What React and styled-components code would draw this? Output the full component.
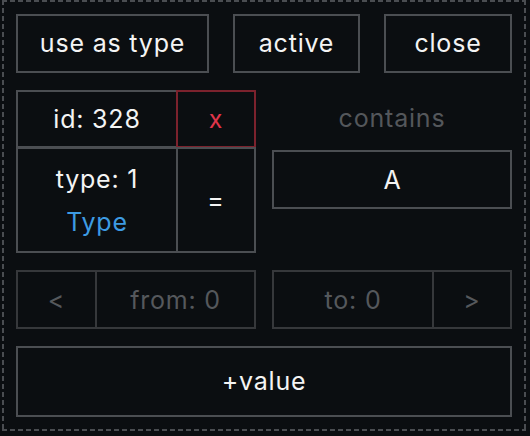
import React from 'react';
import styled, { createGlobalStyle } from 'styled-components';

const GlobalStyle = createGlobalStyle`
  html, body {
    margin: 0;
    padding: 0;
    background: #0b0e11;
  }
  body {
    font-family: Inter, "Noto Sans", sans-serif;
    color: #f2f2f2;
  }
`;

const dash = '#4a4d51';

const Frame = styled.div`
  margin: 0 4px 0 2px;
  padding: 14px;
  display: flex;
  flex-direction: column;
  gap: 17px;
  background:
    repeating-linear-gradient(90deg, ${dash} 0 5px, transparent 5px 8px) top left / 100% 2px no-repeat,
    repeating-linear-gradient(90deg, ${dash} 0 5px, transparent 5px 8px) bottom left / 100% 2px no-repeat,
    repeating-linear-gradient(180deg, ${dash} 0 5px, transparent 5px 8px) top left / 2px 100% no-repeat,
    repeating-linear-gradient(180deg, ${dash} 0 5px, transparent 5px 8px) top right / 2px 100% no-repeat;
`;

const Toolbar = styled.div`
  display: flex;
  gap: 24px;
`;

const Button = styled.button`
  box-sizing: border-box;
  width: ${(p) => p.$width || '100%'};
  flex-grow: ${(p) => (p.$grow ? 1 : 0)};
  flex-shrink: 0;
  height: ${(p) => p.$height || '59px'};
  background: transparent;
  border: 2px solid #4b4e52;
  color: #f4f4f4;
  font-family: inherit;
  font-size: 25px;
  letter-spacing: 0.8px;
  padding: 0 0 2px;
  display: flex;
  align-items: center;
  justify-content: center;
`;

const Columns = styled.div`
  display: grid;
  grid-template-columns: minmax(0, 1fr) minmax(0, 1fr);
  column-gap: 16px;
`;

const Table = styled.div`
  display: grid;
  grid-template-columns: 162px 78px;
  grid-template-rows: 58px 105px;
`;

const Cell = styled.div`
  box-sizing: border-box;
  border: 2px solid ${(p) => (p.$danger ? '#7c222d' : '#4b4e52')};
  color: ${(p) => (p.$danger ? '#e0354a' : '#f4f4f4')};
  font-size: 25px;
  letter-spacing: 0.8px;
  display: flex;
  flex-direction: column;
  align-items: center;
  justify-content: center;
  gap: 13px;
  margin-left: ${(p) => (p.$joinLeft ? '-2px' : '0')};
  margin-top: ${(p) => (p.$joinTop ? '-1px' : '0')};
`;

const Link = styled.span`
  color: #3d9be3;
`;

const Filter = styled.div`
  display: grid;
  grid-template-rows: 60px 59px;
`;

const Label = styled.div`
  color: #54575b;
  font-size: 25px;
  letter-spacing: 0.8px;
  display: flex;
  align-items: center;
  justify-content: center;
  padding-bottom: 4px;
`;

const Field = styled.div`
  box-sizing: border-box;
  border: 2px solid #4b4e52;
  font-size: 25px;
  display: flex;
  align-items: center;
  justify-content: center;
`;

const Range = styled.div`
  box-sizing: border-box;
  display: grid;
  grid-template-columns: ${(p) => p.$cols};
  height: 59px;
  border: 2px solid #36383b;
`;

const RangePart = styled.div`
  display: flex;
  align-items: center;
  justify-content: center;
  color: #55585c;
  font-size: 25px;
  letter-spacing: 0.8px;
  border-left: ${(p) => (p.$divider ? '2px solid #36383b' : 'none')};
`;

export default function App() {
  return (
    <>
      <GlobalStyle />
      <Frame>
        <Toolbar>
          <Button $width="193px">use as type</Button>
          <Button $width="127px">active</Button>
          <Button $grow $width="auto">close</Button>
        </Toolbar>
        <Columns>
          <Table>
            <Cell>id: 328</Cell>
            <Cell $danger $joinLeft>x</Cell>
            <Cell $joinTop>
              <span>type: 1</span>
              <Link>Type</Link>
            </Cell>
            <Cell $joinTop $joinLeft>=</Cell>
          </Table>
          <Filter>
            <Label>contains</Label>
            <Field>A</Field>
          </Filter>
        </Columns>
        <Columns>
          <Range $cols="77px 1fr">
            <RangePart>&lt;</RangePart>
            <RangePart $divider>from: 0</RangePart>
          </Range>
          <Range $cols="1fr 78px">
            <RangePart>to: 0</RangePart>
            <RangePart $divider>&gt;</RangePart>
          </Range>
        </Columns>
        <Button $height="71px">+value</Button>
      </Frame>
    </>
  );
}
